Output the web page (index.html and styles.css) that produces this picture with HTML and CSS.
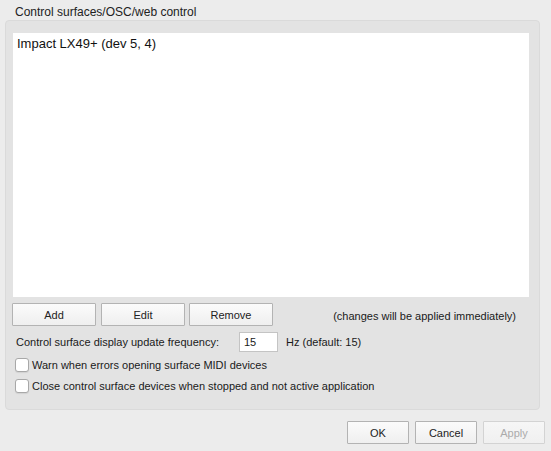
FILE: index.html
```html
<!DOCTYPE html>
<html>
<head>
<meta charset="utf-8">
<link rel="stylesheet" href="styles.css">
</head>
<body>
<div class="page">
  <div class="group-title">Control surfaces/OSC/web control</div>
  <div class="group">
    <div class="list">
      <div class="list-item">Impact LX49+ (dev 5, 4)</div>
    </div>
    <div class="btn-row">
      <button class="btn btn-sm">Add</button>
      <button class="btn btn-sm">Edit</button>
      <button class="btn btn-sm">Remove</button>
      <span class="note">(changes will be applied immediately)</span>
    </div>
    <div class="freq-row">
      <span class="freq-label">Control surface display update frequency:</span>
      <span class="input">15</span>
      <span class="hz">Hz (default: 15)</span>
    </div>
    <label class="check-row"><span class="box"></span><span>Warn when errors opening surface MIDI devices</span></label>
    <label class="check-row"><span class="box"></span><span>Close control surface devices when stopped and not active application</span></label>
  </div>
  <div class="footer">
    <button class="btn btn-lg">OK</button>
    <button class="btn btn-lg">Cancel</button>
    <button class="btn btn-lg disabled">Apply</button>
  </div>
</div>
</body>
</html>
```
FILE: styles.css
```css
html, body {
  margin: 0;
  padding: 0;
  background: #ececec;
  font-family: "Liberation Sans", Arial, sans-serif;
  font-size: 11px;
  color: #1a1a1a;
}
.page {
  width: 551px;
  height: 451px;
  position: relative;
}
.group-title {
  padding: 5px 0 0 15px;
  height: 15px;
  line-height: 15px;
  font-size: 12px;
  color: #222;
}
.group {
  margin-left: 5px;
  width: 533px;
  height: 388px;
  background: #e3e3e3;
  border: 1px solid #dadada;
  border-radius: 4px;
  padding: 0;
  box-sizing: content-box;
}
.list {
  margin: 12px 0 0 7px;
  width: 516px;
  height: 264px;
  background: #ffffff;
}
.list-item {
  padding: 3px 0 0 4px;
  font-size: 13px;
  color: #111;
}
.btn-row {
  display: flex;
  align-items: center;
  margin: 6px 0 0 6px;
  height: 23px;
}
.btn {
  font-family: "Liberation Sans", Arial, sans-serif;
  font-size: 11px;
  color: #222;
  background: linear-gradient(#fbfbfb, #efefef);
  border: 1px solid #b3b3b3;
  border-radius: 1px;
  height: 23px;
  padding: 0;
  margin: 0;
  box-sizing: border-box;
}
.btn-sm {
  width: 84px;
  margin-right: 5px;
}
.btn-sm + .btn-sm {
  margin-right: 4px;
}
.note {
  margin-left: auto;
  margin-right: 23px;
  padding-top: 2px;
  font-size: 11px;
}
.freq-row {
  display: flex;
  align-items: center;
  margin: 6px 0 0 10px;
  height: 20px;
}
.freq-label {
  width: 223px;
}
.input {
  width: 39px;
  height: 20px;
  box-sizing: border-box;
  background: #fff;
  border: 1px solid #c4c4c4;
  padding: 3px 0 0 4px;
  font-size: 11px;
}
.hz {
  margin-left: 8px;
}
.check-row {
  display: flex;
  align-items: center;
  margin: 0 0 0 9px;
  height: 14px;
}
.check-row:first-of-type {
  margin-top: 6px;
}
.check-row + .check-row {
  margin-top: 7px;
}
.box {
  width: 14px;
  height: 14px;
  box-sizing: border-box;
  background: #fff;
  border: 1px solid #a8a8a8;
  border-radius: 3px;
  margin-right: 3px;
  box-shadow: 0 1px 1px rgba(0,0,0,0.08);
}
.footer {
  display: flex;
  justify-content: flex-end;
  gap: 6px;
  margin: 11px 6px 0 0;
}
.btn-lg {
  width: 62px;
}
.disabled {
  color: #ababab;
  border-color: #d3d3d3;
  background: linear-gradient(#f6f6f6, #f0f0f0);
}
```
